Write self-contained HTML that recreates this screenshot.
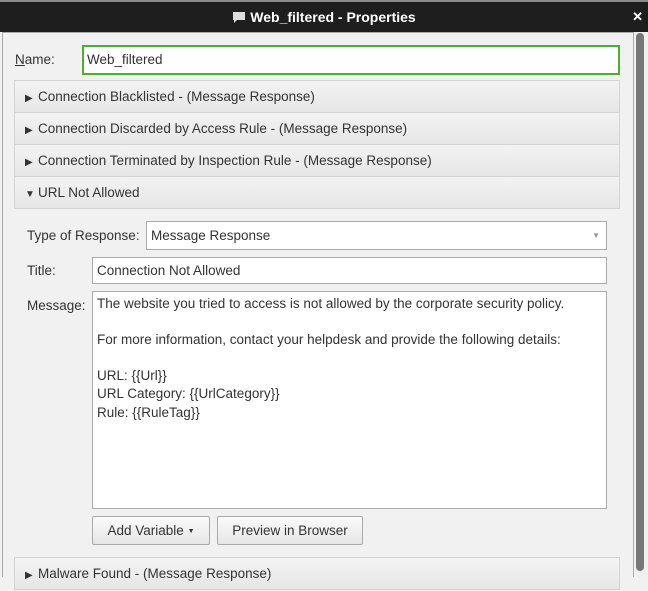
<!DOCTYPE html>
<html><head><style>
*{box-sizing:border-box;margin:0;padding:0}
body{width:648px;height:571px;overflow:hidden;background:#f1f1f1;font-family:"Liberation Sans",sans-serif;font-size:13.5px;color:#333;position:relative}
.top{position:absolute;left:0;top:0;width:648px;height:32px;background:#1e1e1e;border-top:2px solid #8a8a8a;color:#fff;font-weight:bold;font-size:14px;text-align:center;line-height:30px}
.x{position:absolute;right:5px;top:0;font-size:13px}
.panel{position:absolute;left:2px;top:32px;width:632px;height:545px;border:1px solid #aaa;border-bottom:none;background:#f1f1f1}
.sb{position:absolute;left:636px;top:33px;width:8px;height:538px;background:#777;border-radius:4px}
.abs{position:absolute}
.hdr{position:absolute;left:14px;width:606px;height:33px;border:1px solid #d4d4d4;background:linear-gradient(#f3f3f3,#e6e6e6);line-height:31px;padding-left:10px;color:#333}
.ar{font-size:10px;display:inline-block;width:13px}
.inp{position:absolute;background:#fff;border:1px solid #aaa;padding-left:4px}
.btn{position:absolute;height:29px;border:1px solid #aaa;border-radius:2px;background:linear-gradient(#fafafa,#e6e6e6);text-align:center;line-height:27px}
</style></head><body>
<div class="top"><svg width="14" height="13" style="vertical-align:-2px;margin-right:4px" viewBox="0 0 14 13"><path d="M1 1h12v8H5l-3 3V9H1z" fill="#ddd"/></svg>Web_filtered - Properties<span class="x">✕</span></div>
<div class="panel"></div>
<div class="sb"></div>
<div class="abs" style="left:15px;top:52px"><u>N</u>ame:</div>
<div class="inp" style="left:82px;top:45px;width:538px;height:30px;border:2px solid #4caf32;line-height:26px;padding-left:3px">Web_filtered</div>
<div class="hdr" style="top:80px"><span class="ar">▶</span>Connection Blacklisted - (Message Response)</div>
<div class="hdr" style="top:112px"><span class="ar">▶</span>Connection Discarded by Access Rule - (Message Response)</div>
<div class="hdr" style="top:144px"><span class="ar">▶</span>Connection Terminated by Inspection Rule - (Message Response)</div>
<div class="hdr" style="top:176px"><span class="ar">▼</span>URL Not Allowed</div>
<div class="abs" style="left:27px;top:228px">Type of Response:</div>
<div class="inp" style="left:146px;top:221px;width:461px;height:29px;line-height:27px">Message Response<span style="position:absolute;right:6px;color:#999;font-size:8px">▼</span></div>
<div class="abs" style="left:27px;top:263px">Title:</div>
<div class="inp" style="left:92px;top:257px;width:515px;height:27px;line-height:25px">Connection Not Allowed</div>
<div class="abs" style="left:27px;top:298px">Message:</div>
<div class="inp" style="left:92px;top:291px;width:515px;height:218px;padding:3px 4px;line-height:18.1px">The website you tried to access is not allowed by the corporate security policy.<br><br>For more information, contact your helpdesk and provide the following details:<br><br>URL: {{Url}}<br>URL Category: {{UrlCategory}}<br>Rule: {{RuleTag}}</div>
<div class="btn" style="left:92px;top:516px;width:118px">Add Variable <span style="font-size:7px;vertical-align:2px">▼</span></div>
<div class="btn" style="left:217px;top:516px;width:146px">Preview in Browser</div>
<div class="hdr" style="top:557px"><span class="ar">▶</span>Malware Found - (Message Response)</div>
</body></html>
